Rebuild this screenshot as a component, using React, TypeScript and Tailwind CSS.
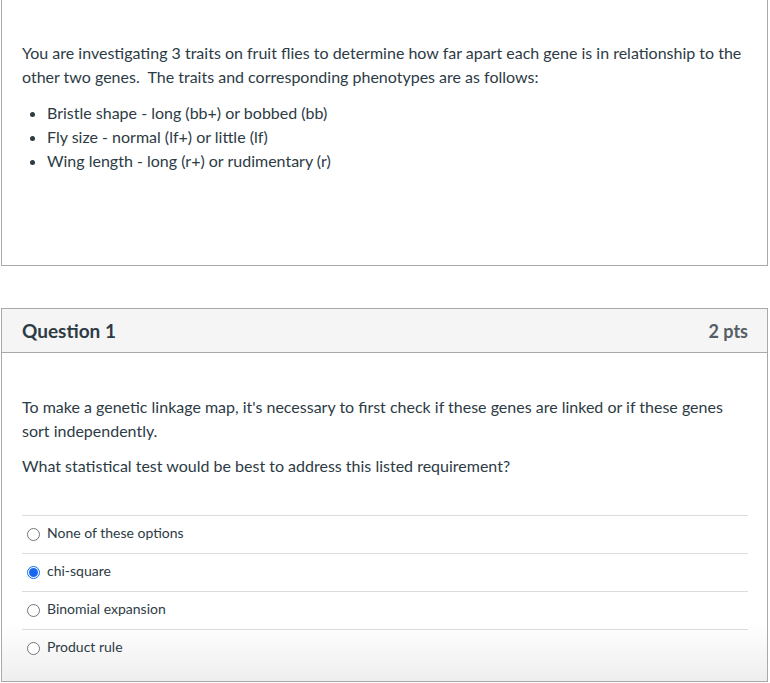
const answers = [
  { label: "None of these options", checked: false },
  { label: "chi-square", checked: true },
  { label: "Binomial expansion", checked: false },
  { label: "Product rule", checked: false },
];

function Radio({ checked }: { checked: boolean }) {
  if (checked) {
    return (
      <span className="w-[13px] h-[13px] rounded-full border border-[#0b6ff0] flex items-center justify-center bg-white shrink-0">
        <span className="w-[9px] h-[9px] rounded-full bg-[#1a66f0]" />
      </span>
    );
  }
  return <span className="w-[13px] h-[13px] rounded-full border border-[#767676] bg-white shrink-0" />;
}

export default function App() {
  return (
    <div
      className="w-[770px] h-[683px] overflow-hidden bg-white text-[#2d3b45] text-[16px] leading-[24px]"
      style={{ fontFamily: "Lato, 'Open Sans', sans-serif" }}
    >
      <div className="ml-[1px] w-[767px]">
        {/* Intro text box */}
        <div className="border-x border-b border-[#a9a9a9] pl-[20px] pr-[19px] pt-[41px] pb-[92px]">
          <p>
            You are investigating 3 traits on fruit flies to determine how far apart each gene is in relationship to the
            other two genes.&nbsp; The traits and corresponding phenotypes are as follows:
          </p>
          <ul className="mt-[12px] list-disc pl-[25px]">
            <li>Bristle shape - long (bb+) or bobbed (bb)</li>
            <li>Fly size - normal (lf+) or little (lf)</li>
            <li>Wing length - long (r+) or rudimentary (r)</li>
          </ul>
        </div>

        {/* Question card */}
        <div className="mt-[42px] border border-[#a9a9a9] bg-[linear-gradient(to_bottom,#ffffff_calc(100%-58px),#eeeeee)] pb-[14px]">
          <div className="h-[44px] bg-[#f5f5f5] border-b border-[#a9a9a9] pl-[20px] pr-[19px] flex items-center justify-between">
            <h2 className="text-[19px] font-bold">Question 1</h2>
            <span className="text-[18px] font-bold text-[#555e66]">2 pts</span>
          </div>
          <div className="pl-[20px] pr-[19px] pt-[42px]">
            <p>
              To make a genetic linkage map, it's necessary to first check if these genes are linked or if these genes
              sort independently.
            </p>
            <p className="mt-[11px]">What statistical test would be best to address this listed requirement?</p>
            <div className="mt-[37px]">
              {answers.map((a) => (
                <div key={a.label} className="h-[38px] border-t border-[#dcdcdc] flex items-center pl-[5px] gap-[7px] text-[14px]">
                  <Radio checked={a.checked} />
                  <span className="-mt-[3px]">{a.label}</span>
                </div>
              ))}
            </div>
          </div>
        </div>
      </div>
    </div>
  );
}
